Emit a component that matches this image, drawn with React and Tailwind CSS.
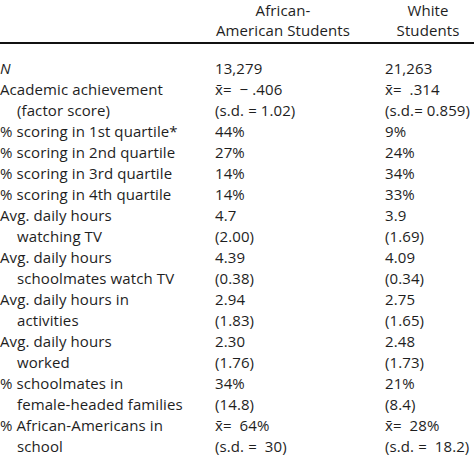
const ROWS = [
  { label: <i>N</i>, a: '13,279', w: '21,263' },
  { label: 'Academic achievement', a: 'x̄=  − .406', w: 'x̄=  .314' },
  { label: '(factor score)', indent: true, a: '(s.d. = 1.02)', w: '(s.d.= 0.859)' },
  { label: '% scoring in 1st quartile*', a: '44%', w: '9%' },
  { label: '% scoring in 2nd quartile', a: '27%', w: '24%' },
  { label: '% scoring in 3rd quartile', a: '14%', w: '34%' },
  { label: '% scoring in 4th quartile', a: '14%', w: '33%' },
  { label: 'Avg. daily hours', a: '4.7', w: '3.9' },
  { label: 'watching TV', indent: true, a: '(2.00)', w: '(1.69)' },
  { label: 'Avg. daily hours', a: '4.39', w: '4.09' },
  { label: 'schoolmates watch TV', indent: true, a: '(0.38)', w: '(0.34)' },
  { label: 'Avg. daily hours in', a: '2.94', w: '2.75' },
  { label: 'activities', indent: true, a: '(1.83)', w: '(1.65)' },
  { label: 'Avg. daily hours', a: '2.30', w: '2.48' },
  { label: 'worked', indent: true, a: '(1.76)', w: '(1.73)' },
  { label: '% schoolmates in', a: '34%', w: '21%' },
  { label: 'female-headed families', indent: true, a: '(14.8)', w: '(8.4)' },
  { label: '% African-Americans in', a: 'x̄=  64%', w: 'x̄=  28%' },
  { label: 'school', indent: true, a: '(s.d. =  30)', w: '(s.d. =  18.2)' },
];

export default function App() {
  return (
    <div
      className="w-[474px] h-[457px] overflow-hidden bg-white text-[#1e1e1e] text-[15px] tracking-[0.1px] whitespace-pre"
      style={{ fontFamily: '"Open Sans", sans-serif' }}
    >
      <div className="grid grid-cols-[215px_170px_1fr] leading-[20px]">
        <div />
        <div className="text-center w-[136px]">African-<br />American Students</div>
        <div className="text-center w-[86px]">White<br />Students</div>
      </div>
      <div className="h-[2px] bg-[#111] mt-[2px]" />
      <div className="grid grid-cols-[215px_170px_1fr] leading-[21px] pt-[14px]">
        {ROWS.map((r, i) => (
          <div key={i} className="contents">
            <div className={r.indent ? 'pl-[17px]' : ''}>{r.label}</div>
            <div>{r.a}</div>
            <div>{r.w}</div>
          </div>
        ))}
      </div>
    </div>
  );
}
